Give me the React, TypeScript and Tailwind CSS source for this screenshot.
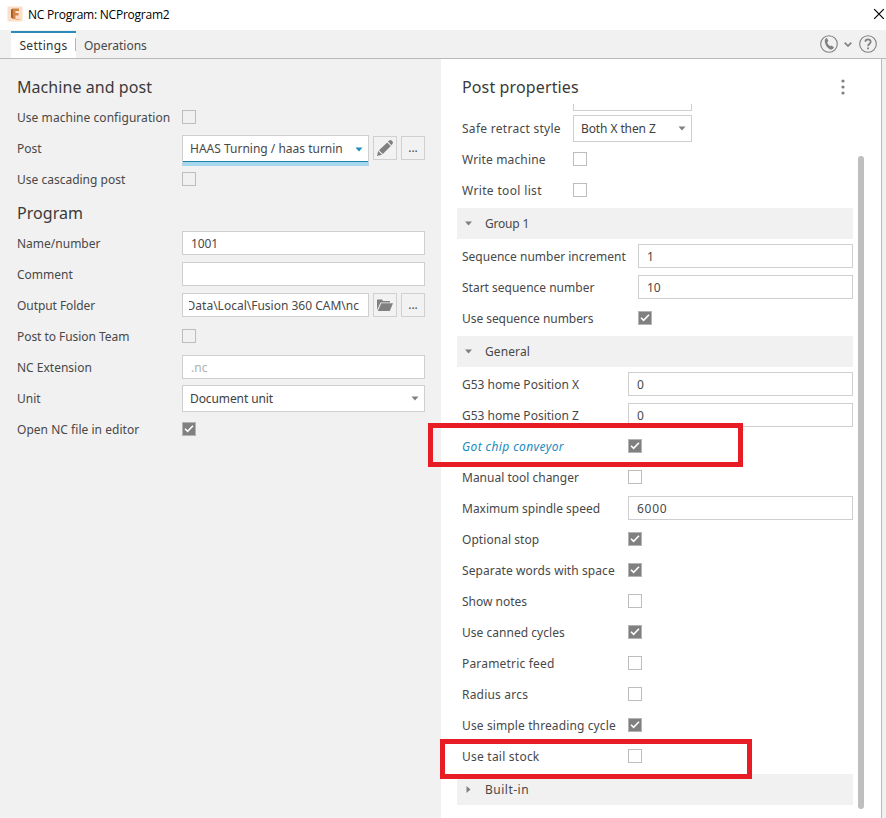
import type { ReactNode } from 'react'

type CheckProps = {
    checked?: boolean
}

const Check = ({ checked }: CheckProps) => {
    return (
        <div className={checked ? "w-3.5 h-3.5 shrink-0 border border-[#b4b4b4] bg-[#808080]" : "w-3.5 h-3.5 shrink-0 border border-[#bdbdbd]"}>
            {checked && (
                <svg viewBox="0 0 12 12" className="w-3 h-3" fill="none" stroke="#fff" strokeWidth="1.6">
                    <path d="M2 5.8 L4.6 8.4 L10 2.8" />
                </svg>
            )}
        </div>
    )
}

type InputProps = {
    value?: string,
    placeholder?: string,
    tracking?: string
}

const Input = ({ value, placeholder, tracking }: InputProps) => {
    return (
        <div className={`flex flex-1 items-center h-6 pl-2 pt-0.5 bg-white border border-[#cfcfcf] ${tracking ?? ""}`}>
            {value ?? <span className="text-[#b0b0b0]">{placeholder}</span>}
        </div>
    )
}

const Caret = ({ className }: { className: string }) => {
    return (
        <svg viewBox="0 0 8 5" className={className} fill="currentColor">
            <path d="M0.5 0.5 H7.5 L4 4.5 Z" />
        </svg>
    )
}

type SelectProps = {
    value: string,
    className: string
}

const Select = ({ value, className }: SelectProps) => {
    return (
        <div className={`flex items-center justify-between self-start mt-0.5 h-[27px] pl-[7px] pr-[5px] bg-white border border-[#cfcfcf] text-[#404040] tracking-[-0.1px] ${className}`}>
            <span>{value}</span>
            <Caret className="w-2 h-[5px] text-[#808080]" />
        </div>
    )
}

const SquareButton = ({ children }: { children: ReactNode }) => {
    return (
        <div className="flex items-center justify-center w-6 h-6 ml-1 shrink-0 border border-[#d0d0d0] bg-[#f2f2f2]">
            {children}
        </div>
    )
}

type RowProps = {
    label: string,
    labelWidth: string,
    tracking?: string,
    children: ReactNode
}

const Row = ({ label, labelWidth, tracking, children }: RowProps) => {
    return (
        <div className="flex items-center h-[30px] mb-px">
            <div className={`shrink-0 pt-0.5 whitespace-nowrap ${labelWidth} ${tracking ?? ""}`}>{label}</div>
            {children}
        </div>
    )
}

type GroupBarProps = {
    title: string,
    open?: boolean,
    tracking?: string
}

const GroupBar = ({ title, open, tracking }: GroupBarProps) => {
    return (
        <div className="flex items-center h-[31px] -ml-[5px] mt-[3px] mb-0.5 pl-[7px] bg-[#f1f1f1]">
            <Caret className={open ? "w-[9px] h-[5px] text-[#808080]" : "w-[9px] h-[5px] text-[#808080] -rotate-90"} />
            <span className={`ml-3 ${tracking ?? ""}`}>{title}</span>
        </div>
    )
}

const TitleBar = () => {
    return (
        <div className="flex items-center justify-between h-[30px] pl-[7px] pr-[1px] bg-white text-black">
            <div className="flex items-center">
                <svg viewBox="0 0 16 16" className="w-4 h-4 -mt-0.5">
                    <rect x="0.5" y="0.5" width="15" height="15" rx="1" fill="#fbdfc9" />
                    <path d="M6 2.5 H12 V5 H8.5 V7 H11.5 V9.5 H8.5 V13 H6 Z" fill="#d58543" />
                    <path d="M4 3.5 L6 2.5 V13 L4 11.5 Z" fill="#a85f2a" />
                    <path d="M8.5 13 H12.5 V14 H8.5 Z" fill="#f3b27c" />
                </svg>
                <span className="ml-[5px] text-[12px] tracking-[-0.23px] font-['Open_Sans',sans-serif]">NC Program: NCProgram2</span>
            </div>
            <svg viewBox="0 0 12 12" className="w-3 h-3 -mt-0.5" fill="none" stroke="#000" strokeWidth="1.2">
                <path d="M1.2 1.2 L10.8 10.8 M10.8 1.2 L1.2 10.8" />
            </svg>
        </div>
    )
}

const TabBar = () => {
    return (
        <div className="flex items-end h-[29px] pl-[11px] pr-[9px] border-b border-[#b9b9b9] bg-[#f1f1f1]">
            <div className="flex items-center justify-center w-[65px] h-[27px] border-t-2 border-[#2b8cb8] bg-white text-[#333] tracking-[0.3px]">Settings</div>
            <div className="w-px h-[13px] mb-[7px] -ml-px bg-[#b5b5b5]"></div>
            <div className="flex items-center h-[25px] ml-2">Operations</div>
            <div className="flex items-center ml-auto mb-[5px] text-[#808080]">
                <svg viewBox="0 0 18 18" className="w-[18px] h-[18px]">
                    <circle cx="9" cy="9" r="8.3" fill="none" stroke="currentColor" strokeWidth="1.1" />
                    <path d="M5.2 4 L6.9 3 L8.5 6 L7.2 7.1 C7.4 8.8 8.6 10.4 10.3 11.2 L11.7 10.4 L14 12.5 L12.8 14.1 C11.6 15 9 14.2 7 11.9 C4.9 9.4 4.2 5.6 5.2 4 Z" fill="currentColor" />
                </svg>
                <svg viewBox="0 0 8 5" className="w-2 h-[5px] ml-1.5" fill="none" stroke="currentColor" strokeWidth="1.7">
                    <path d="M0.7 0.7 L4 4 L7.3 0.7" />
                </svg>
                <svg viewBox="0 0 18 18" className="w-[18px] h-[18px] ml-[7px]" fill="none" stroke="currentColor">
                    <circle cx="9" cy="9" r="8.3" strokeWidth="1.1" />
                    <path d="M6.4 6.8 C6.4 3.6 11.7 3.6 11.7 6.8 C11.7 8.8 9.1 8.7 9.1 11.2" strokeWidth="1.7" />
                    <path d="M9.1 12.5 V14.3" strokeWidth="1.8" />
                </svg>
            </div>
        </div>
    )
}

const LeftPanel = () => {
    const w = "w-[165px]"
    return (
        <div className="w-[441px] shrink-0 pl-[17px] pr-4 pt-[15px] bg-[#f1f1f1]">
            <h2 className="h-7 text-[16px] leading-[26px] tracking-[0.06px] text-[#3a3a3a]">Machine and post</h2>
            <Row label="Use machine configuration" labelWidth={w} tracking="tracking-[0.05px]"><Check /></Row>
            <Row label="Post" labelWidth={w}>
                <div className="flex self-start items-center justify-between w-[187px] h-[31px] mt-0.5 pl-[7px] pr-[5px] border border-b-4 border-[#cfcfcf] border-b-[#a5d8ef] bg-white shadow-[inset_0_-1px_0_#2080a8]">
                    <span className="w-[155px] overflow-hidden whitespace-nowrap">HAAS Turning / haas turnin</span>
                    <Caret className="w-2 h-[5px] text-[#1c8dbb]" />
                </div>
                <SquareButton>
                    <svg viewBox="0 0 18 18" className="w-[18px] h-[18px]" fill="#808080">
                        <path d="M1 17 L2.2 12 L6 15.8 Z" />
                        <path d="M3 11.2 L11.2 3.4 L14.8 7 L6.8 15 Z" />
                        <path d="M12 2.6 L13.5 1.2 Q14.5 0.6 15.6 1.6 L16.5 2.6 Q17.4 3.7 16.6 4.8 L15.5 6.2 Z" />
                    </svg>
                </SquareButton>
                <SquareButton>...</SquareButton>
            </Row>
            <Row label="Use cascading post" labelWidth={w}><Check /></Row>
            <h2 className="h-[33px] text-[16px] leading-[36px] tracking-[0.06px] text-[#3a3a3a]">Program</h2>
            <Row label="Name/number" labelWidth={w}><Input value="1001" tracking="tracking-[-0.1px]" /></Row>
            <Row label="Comment" labelWidth={w}><Input /></Row>
            <Row label="Output Folder" labelWidth={w} tracking="tracking-[-0.07px]">
                <div className="flex items-center w-[187px] h-6 pl-1.5 pr-[9px] pt-0.5 border border-[#cfcfcf] bg-white">
                    <div className="flex justify-end w-full overflow-hidden whitespace-nowrap"><span>Data\Local\Fusion 360 CAM\nc</span></div>
                </div>
                <SquareButton>
                    <svg viewBox="0 0 16 12" className="w-4 h-3" fill="#808080">
                        <path d="M0 11 V0.5 H5 L6.2 2 H13 V3.5 H3.5 Z" />
                        <path d="M4.2 4.3 H16 L12.8 12 H0.8 Z" />
                    </svg>
                </SquareButton>
                <SquareButton>...</SquareButton>
            </Row>
            <Row label="Post to Fusion Team" labelWidth={w} tracking="tracking-[-0.05px]"><Check /></Row>
            <Row label="NC Extension" labelWidth={w}><Input placeholder=".nc" /></Row>
            <Row label="Unit" labelWidth={w}><Select value="Document unit" className="flex-1" /></Row>
            <Row label="Open NC file in editor" labelWidth={w} tracking="tracking-[0.03px]"><Check checked /></Row>
        </div>
    )
}

const RightPanel = () => {
    const top = "w-[111px]"
    const seq = "w-[176px]"
    const gen = "w-[166px]"
    return (
        <div className="relative flex-1 mr-1 pl-[21px] pr-7 border-r border-[#b9b9b9] bg-white">
            <div className="flex items-center justify-between h-[45px] pt-3">
                <h2 className="-mt-0.5 text-[16px] tracking-[0.13px] text-[#3a3a3a]">Post properties</h2>
                <svg viewBox="0 0 4 16" className="w-1 h-4 mr-2 -mt-px" fill="#808080">
                    <circle cx="2" cy="2" r="1.6" />
                    <circle cx="2" cy="8" r="1.6" />
                    <circle cx="2" cy="14" r="1.6" />
                </svg>
            </div>
            <div className="w-[119px] h-[7px] ml-[111px] mb-0.5 border border-t-0 border-[#cfcfcf]"></div>
            <Row label="Safe retract style" labelWidth={top} tracking="tracking-[0.28px]"><Select value="Both X then Z" className="w-[119px]" /></Row>
            <Row label="Write machine" labelWidth={top} tracking="tracking-[0.15px]"><Check /></Row>
            <Row label="Write tool list" labelWidth={top} tracking="tracking-[0.35px]"><Check /></Row>
            <GroupBar title="Group 1" open tracking="tracking-[-0.2px]" />
            <Row label="Sequence number increment" labelWidth={seq}><Input value="1" /></Row>
            <Row label="Start sequence number" labelWidth={seq}><Input value="10" /></Row>
            <Row label="Use sequence numbers" labelWidth={seq} tracking="tracking-[-0.05px]"><Check checked /></Row>
            <GroupBar title="General" open tracking="tracking-[0.1px]" />
            <Row label="G53 home Position X" labelWidth={gen}><Input value="0" /></Row>
            <Row label="G53 home Position Z" labelWidth={gen}><Input value="0" /></Row>
            <Row label="Got chip conveyor" labelWidth={gen} tracking="tracking-[0.4px] italic text-[#1a8cc0]"><Check checked /></Row>
            <Row label="Manual tool changer" labelWidth={gen}><Check /></Row>
            <Row label="Maximum spindle speed" labelWidth={gen}><Input value="6000" tracking="tracking-[0.7px]" /></Row>
            <Row label="Optional stop" labelWidth={gen} tracking="tracking-[0.05px]"><Check checked /></Row>
            <Row label="Separate words with space" labelWidth={gen} tracking="tracking-[0.09px]"><Check checked /></Row>
            <Row label="Show notes" labelWidth={gen}><Check /></Row>
            <Row label="Use canned cycles" labelWidth={gen} tracking="tracking-[0.03px]"><Check checked /></Row>
            <Row label="Parametric feed" labelWidth={gen} tracking="tracking-[0.18px]"><Check /></Row>
            <Row label="Radius arcs" labelWidth={gen} tracking="tracking-[0.2px]"><Check /></Row>
            <Row label="Use simple threading cycle" labelWidth={gen} tracking="tracking-[0.12px]"><Check checked /></Row>
            <Row label="Use tail stock" labelWidth={gen} tracking="tracking-[0.23px]"><Check /></Row>
            <GroupBar title="Built-in" tracking="tracking-[0.5px]" />
            {/* scrollbar thumb */}
            <div className="absolute right-[17px] top-[97px] w-1.5 h-[653px] rounded-full bg-[#bfbfbf]"></div>
        </div>
    )
}

const App = () => {
    return (
        <div className="relative flex flex-col w-[886px] h-[818px] overflow-hidden bg-[#f1f1f1] font-['Noto_Sans',sans-serif] text-[12px] leading-4 text-[#484848]">
            <TitleBar />
            <TabBar />
            <div className="flex flex-1">
                <LeftPanel />
                <RightPanel />
            </div>
            {/* highlight frames */}
            <div className="absolute left-[428px] top-[423px] w-[315px] h-11 border-5 border-[#e81c24]"></div>
            <div className="absolute left-[440px] top-[739px] w-[312px] h-10 border-5 border-[#e81c24]"></div>
        </div>
    )
}

export default App
